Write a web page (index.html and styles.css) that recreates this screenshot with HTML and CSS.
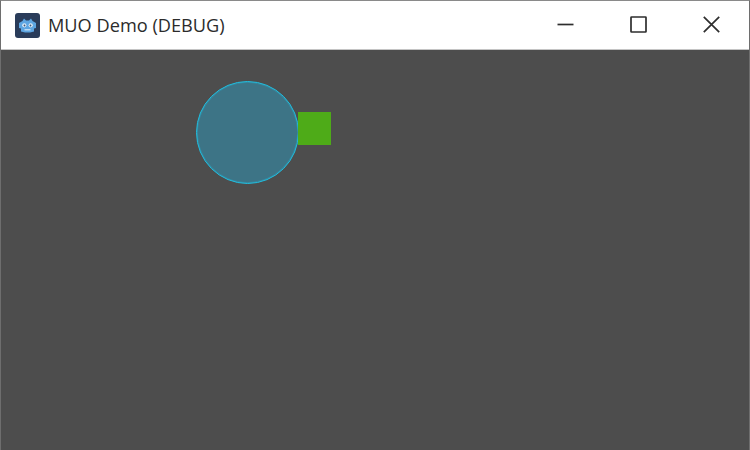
FILE: index.html
```html
<!DOCTYPE html>
<html lang="en">
<head>
    <meta charset="UTF-8">
    <title>MUO Demo (DEBUG)</title>
    <link rel="stylesheet" href="styles.css">
</head>
<body>

    <div class="window">
        <!-- title bar -->
        <div class="titlebar">
            <svg class="app-icon" width="25" height="25" viewBox="0 0 25 25">
                <rect width="25" height="25" rx="3" fill="#2a3c5a"/>
                <path d="M4 10 L7.5 8 L9 5.5 L11 7.5 L14 7.5 L16 5.5 L17.5 8 L21 10 L21 15 L19 15.5 L19 18.5 L15 19.5 L10 19.5 L6 18.5 L6 15.5 L4 15 Z" fill="#5ea6e2"/>
                <circle cx="9.3" cy="12.3" r="2.1" fill="#dcebf8"/>
                <circle cx="15.7" cy="12.3" r="2.1" fill="#dcebf8"/>
                <circle cx="9.5" cy="12.5" r="0.9" fill="#3a5578"/>
                <circle cx="15.5" cy="12.5" r="0.9" fill="#3a5578"/>
                <path d="M9.5 16.8 H15.5" stroke="#dcebf8" stroke-width="1.1"/>
            </svg>
            <span class="title">MUO Demo (DEBUG)</span>
            <div class="controls">
                <svg class="control" width="17" height="17" viewBox="0 0 17 17">
                    <path d="M0.5 8.5 H16.5" stroke="#2e2e2e" stroke-width="1.7"/>
                </svg>
                <svg class="control" width="17" height="17" viewBox="0 0 17 17">
                    <rect x="1" y="1" width="15" height="15" rx="0.5" fill="none" stroke="#2e2e2e" stroke-width="1.7"/>
                </svg>
                <svg class="control" width="17" height="17" viewBox="0 0 17 17">
                    <path d="M0.8 0.8 L16.2 16.2 M16.2 0.8 L0.8 16.2" stroke="#2e2e2e" stroke-width="1.7"/>
                </svg>
            </div>
        </div>

        <!-- game viewport -->
        <div class="viewport">
            <div class="circle"></div>
            <div class="square"></div>
        </div>
    </div>

</body>
</html>
```

FILE: styles.css
```css
html, body {
    margin: 0;
    padding: 0;
}
body {
    width: 750px;
    height: 450px;
    overflow: hidden;
    font-family: 'Open Sans', 'Noto Sans', sans-serif;
    background-color: #4d4d4d;
}
.window {
    display: flex;
    flex-direction: column;
    height: 450px;
    box-sizing: border-box;
    border-left: 1px solid #6e6e6e;
    border-right: 1px solid #6e6e6e;
    border-top: 1px solid #8a8a8a;
}
.titlebar {
    display: flex;
    align-items: center;
    height: 48px;
    flex-shrink: 0;
    padding-left: 14px;
    background: #ffffff;
    border-bottom: 1px solid #c4c4c4;
}
.app-icon {
    margin-right: 8px;
    flex-shrink: 0;
}
.title {
    font-size: 18.2px;
    color: #2b2b2b;
}
.controls {
    display: flex;
    align-items: center;
    gap: 56px;
    margin-left: auto;
    margin-right: 29px;
    margin-bottom: 2px;
}
.control {
    display: block;
}
.viewport {
    position: relative;
    flex: 1;
    background: #4d4d4d;
}
.circle {
    position: absolute;
    left: 195px;
    top: 31px;
    width: 103px;
    height: 103px;
    box-sizing: border-box;
    border-radius: 50%;
    background: #3d7486;
    border: 1px solid #20bfe0;
    box-shadow: inset 0 0 0 1px rgba(42, 168, 200, 0.35);
}
.square {
    position: absolute;
    left: 297px;
    top: 62px;
    width: 33px;
    height: 33px;
    background: #4eab18;
}
```
